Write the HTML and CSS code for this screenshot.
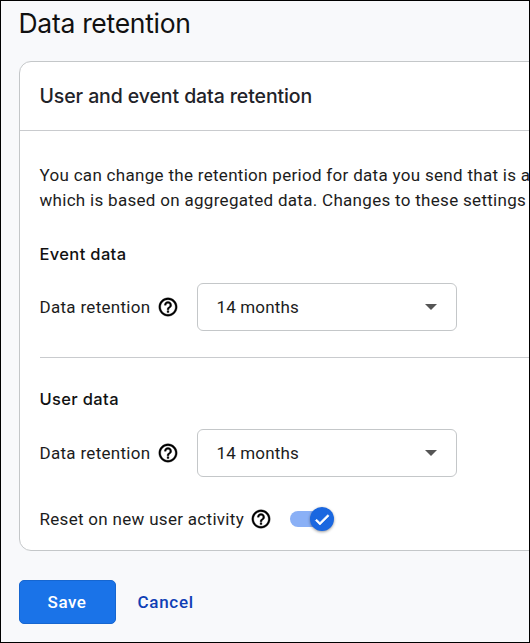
FILE: index.html
```html
<!DOCTYPE html>
<html lang="en">
<head>
  <meta charset="UTF-8">
  <title>Data retention</title>
  <link rel="stylesheet" href="styles.css">
</head>
<body>
  <div class="page">
    <h1 class="page-title">Data retention</h1>

    <div class="card">
      <div class="card-header">
        <h2>User and event data retention</h2>
      </div>
      <div class="card-body">
        <p class="intro">You can change the retention period for data you send that is a<br>which is based on aggregated data. Changes to these settings</p>

        <h3 class="section-title">Event data</h3>
        <div class="field-row">
          <span class="field-label">Data retention</span>
          <svg class="help-icon" viewBox="0 0 24 24"><path d="M11 18h2v-2h-2v2zm1-16C6.48 2 2 6.48 2 12s4.48 10 10 10 10-4.48 10-10S17.52 2 12 2zm0 18c-4.41 0-8-3.59-8-8s3.59-8 8-8 8 3.59 8 8-3.59 8-8 8zm0-14c-2.21 0-4 1.79-4 4h2c0-1.1.9-2 2-2s2 .9 2 2c0 2-3 1.75-3 5h2c0-2.25 3-2.5 3-5 0-2.21-1.79-4-4-4z"/></svg>
          <div class="select">
            <span>14 months</span>
            <span class="select-arrow"></span>
          </div>
        </div>

        <hr class="divider">

        <h3 class="section-title">User data</h3>
        <div class="field-row">
          <span class="field-label">Data retention</span>
          <svg class="help-icon" viewBox="0 0 24 24"><path d="M11 18h2v-2h-2v2zm1-16C6.48 2 2 6.48 2 12s4.48 10 10 10 10-4.48 10-10S17.52 2 12 2zm0 18c-4.41 0-8-3.59-8-8s3.59-8 8-8 8 3.59 8 8-3.59 8-8 8zm0-14c-2.21 0-4 1.79-4 4h2c0-1.1.9-2 2-2s2 .9 2 2c0 2-3 1.75-3 5h2c0-2.25 3-2.5 3-5 0-2.21-1.79-4-4-4z"/></svg>
          <div class="select">
            <span>14 months</span>
            <span class="select-arrow"></span>
          </div>
        </div>

        <div class="reset-row">
          <span class="field-label">Reset on new user activity</span>
          <svg class="help-icon" viewBox="0 0 24 24"><path d="M11 18h2v-2h-2v2zm1-16C6.48 2 2 6.48 2 12s4.48 10 10 10 10-4.48 10-10S17.52 2 12 2zm0 18c-4.41 0-8-3.59-8-8s3.59-8 8-8 8 3.59 8 8-3.59 8-8 8zm0-14c-2.21 0-4 1.79-4 4h2c0-1.1.9-2 2-2s2 .9 2 2c0 2-3 1.75-3 5h2c0-2.25 3-2.5 3-5 0-2.21-1.79-4-4-4z"/></svg>
          <div class="switch">
            <span class="switch-thumb">
              <svg viewBox="0 0 24 24"><path d="M9.5 16.2 5.6 12.3l-1.5 1.5 5.4 5.4L20.4 8.3l-1.5-1.5z"/></svg>
            </span>
          </div>
        </div>
      </div>
    </div>

    <div class="actions">
      <button class="btn-save">Save</button>
      <a class="btn-cancel">Cancel</a>
    </div>
  </div>
</body>
</html>
```

FILE: styles.css
```css
html, body {
  margin: 0;
  height: 100%;
}
body {
  font-family: Roboto, "Liberation Sans", sans-serif;
  color: #1f1f1f;
  overflow: hidden;
}
.page {
  box-sizing: border-box;
  width: 530px;
  height: 643px;
  padding-left: 17.5px;
  background: #f8f9fb;
  border: 1px solid #000;
  border-left-width: 1.5px;
  border-right-width: 1.5px;
  overflow: hidden;
}
.page-title {
  margin: 0;
  padding-top: 4px;
  height: 56px;
  box-sizing: border-box;
  font-family: Inter, sans-serif;
  font-size: 26.5px;
  line-height: 36px;
  font-weight: 400;
  letter-spacing: -0.3px;
  color: #111;
}
.card {
  box-sizing: border-box;
  width: 560px;
  height: 490px;
  margin-top: 4px;
  background: #fff;
  border: 1px solid #c4c7c9;
  border-radius: 12px;
}
.card-header {
  height: 68px;
  display: flex;
  align-items: center;
  padding-left: 20px;
  border-bottom: 1px solid #c9cbce;
}
.card-header h2 {
  margin: 0;
  font-family: Inter, sans-serif;
  font-size: 19.5px;
  font-weight: 500;
  letter-spacing: -0.1px;
  color: #1f2329;
}
.card-body {
  padding: 32px 0 0 20px;
}
.intro {
  margin: 0;
  font-size: 17px;
  line-height: 25px;
  white-space: nowrap;
  letter-spacing: 0.3px;
  color: #1c1c1c;
}
.section-title {
  margin: 29px 0 0;
  font-family: Inter, sans-serif;
  font-size: 16.5px;
  line-height: 24px;
  font-weight: 500;
  letter-spacing: 0.35px;
  color: #111;
}
.field-row {
  display: flex;
  align-items: center;
  margin-top: 17px;
}
.field-label {
  font-size: 17px;
  letter-spacing: 0.3px;
  color: #1c1c1c;
}
.help-icon {
  width: 22px;
  height: 22px;
  margin-left: 6.5px;
  fill: #000;
  stroke: #000;
  stroke-width: 0.4;
  flex: none;
}
.select {
  box-sizing: border-box;
  width: 260px;
  height: 48px;
  margin-left: 17.5px;
  padding: 0 19px;
  display: flex;
  align-items: center;
  justify-content: space-between;
  background: #fff;
  border: 1px solid #c4c7c9;
  border-radius: 6px;
  font-size: 17px;
  letter-spacing: 0.15px;
  color: #1c1c1c;
}
.select-arrow {
  width: 0;
  height: 0;
  border-left: 6.5px solid transparent;
  border-right: 6.5px solid transparent;
  border-top: 6.5px solid #555;
}
.divider {
  margin: 26px 0 0;
  border: 0;
  border-top: 1px solid #c9cbce;
}
.divider + .section-title {
  margin-top: 29px;
}
.divider + .section-title + .field-row {
  margin-top: 18px;
}
.reset-row {
  display: flex;
  align-items: center;
  margin-top: 31px;
}
.reset-row .help-icon {
  margin-left: 6px;
}
.reset-row .switch {
  margin-left: 18px;
}
.switch {
  position: relative;
  width: 32px;
  height: 16px;
  background: #8ab0f6;
  border-radius: 8px;
}
.switch-thumb {
  position: absolute;
  left: 20px;
  top: -4px;
  width: 24px;
  height: 24px;
  display: flex;
  align-items: center;
  justify-content: center;
  background: #1a67e0;
  border-radius: 50%;
  box-shadow: 0 1px 3px rgba(0, 0, 0, 0.4);
}
.switch-thumb svg {
  width: 20px;
  height: 20px;
  fill: #fff;
  stroke: #fff;
  stroke-width: 0.8;
}
.actions {
  display: flex;
  align-items: center;
  margin-top: 29px;
}
.btn-save {
  width: 97px;
  height: 44px;
  background: #1a73e8;
  color: #fff;
  border: 1px solid #1666d0;
  border-radius: 5px;
  font-family: inherit;
  font-size: 17px;
  font-weight: 500;
  letter-spacing: 0.5px;
}
.btn-cancel {
  margin-left: 22px;
  font-size: 17px;
  font-weight: 500;
  letter-spacing: 0.7px;
  color: #0f3fb5;
}
```
